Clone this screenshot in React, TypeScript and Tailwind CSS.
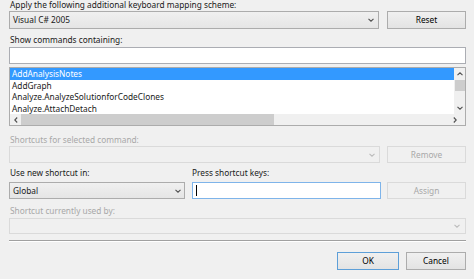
import React from "react"

// Keyboard mapping dialog, options page

const Chevron = ({ dim = false, dir = "down" }: { dim?: boolean; dir?: "down" | "up" | "left" | "right" }) => {
  const rot = { down: 0, up: 180, left: 90, right: -90 }[dir]
  return (
    <svg width="6" height="4" viewBox="0 0 6 4" style={{ transform: `rotate(${rot}deg)` }}>
      <path d="M0.5 0.8 L3 3.2 L5.5 0.8" fill="none" stroke={dim ? "#bcbcbc" : "#505050"} strokeWidth="1.1" />
    </svg>
  )
}

const Btn = ({ label, disabled = false, primary = false }: { label: string; disabled?: boolean; primary?: boolean }) => (
  <div
    className={`flex h-full items-center justify-center border ${
      disabled
        ? "border-[#dadada] bg-[#f0f0f0] text-[#a8a8a8]"
        : primary
        ? "border-[#5d9fd8] bg-gradient-to-b from-[#f0f0f0] to-[#e3e3e3] text-black"
        : "border-[#acacac] bg-gradient-to-b from-[#f0f0f0] to-[#e3e3e3] text-black"
    }`}
  >
    {label}
  </div>
)

export default function App() {
  const rows = ["AddAnalysisNotes", "AddGraph", "Analyze.AnalyzeSolutionforCodeClones", "Analyze.AttachDetach"]

  return (
    <div
      className="w-[474px] h-[279px] overflow-hidden bg-[#f0f0f0] text-[8.3px] leading-[14px] text-[#1a1a1a]"
      style={{ fontFamily: '"Noto Sans", "Open Sans", sans-serif' }}
    >
      <div className="pl-[9px] pr-[8px]">
        <div className="h-[11px] -mt-[2px] pl-[1px]">Apply the following additional keyboard mapping scheme:</div>
        <div className="mt-[2px] flex h-[18px] gap-[8px]">
          <div className="flex flex-1 items-center justify-between border border-[#acacac] bg-gradient-to-b from-[#f0f0f0] to-[#e5e5e5] pl-[3px] pr-[4px]">
            <span>Visual C# 2005</span>
            <Chevron />
          </div>
          <div className="w-[79px]">
            <Btn label="Reset" />
          </div>
        </div>

        <div className="mt-[4px] h-[14px] pl-[1px]">Show commands containing:</div>
        <div className="h-[17px] border border-[#abadb3] bg-white" />

        <div className="mt-[3px] h-[59px] border border-[#acacac] bg-white flex flex-col">
          <div className="flex flex-1">
            <div className="flex-1">
              {rows.map((r, i) => (
                <div key={r} className={`h-[11.5px] leading-[11.5px] pl-[2px] ${i === 0 ? "bg-[#3399ff] text-white" : ""}`}>
                  {r}
                </div>
              ))}
            </div>
            <div className="w-[11px] bg-[#f0f0f0] flex flex-col items-center">
              <div className="h-[12px] flex items-center"><Chevron dir="up" /></div>
              <div className="h-[11px] w-[10px] bg-[#cdcdcd]" />
              <div className="flex-1" />
              <div className="h-[12px] flex items-center"><Chevron /></div>
            </div>
          </div>
          <div className="h-[13px] bg-[#f0f0f0] flex items-center">
            <div className="w-[11px] flex justify-center"><Chevron dir="left" /></div>
            <div className="h-[11px] w-[253px] bg-[#cdcdcd]" />
            <div className="flex-1" />
            <div className="w-[20px] flex justify-center"><Chevron dir="right" /></div>
          </div>
        </div>

        <div className="mt-[7px] h-[13px] pl-[1px] text-[#a8a8a8]">Shortcuts for selected command:</div>
        <div className="flex h-[17px] gap-[7px]">
          <div className="flex flex-1 items-center justify-end border border-[#dadada] bg-[#f0f0f0] pr-[4px]">
            <Chevron dim />
          </div>
          <div className="w-[79px]">
            <Btn label="Remove" disabled />
          </div>
        </div>

        <div className="mt-[3px] flex h-[16px]">
          <div className="w-[183px] pl-[1px]">Use new shortcut in:</div>
          <div>Press shortcut keys:</div>
        </div>
        <div className="flex h-[17px]">
          <div className="flex w-[176px] items-center justify-between border border-[#acacac] bg-gradient-to-b from-[#f0f0f0] to-[#e5e5e5] pl-[3px] pr-[3px]">
            <span>Global</span>
            <Chevron />
          </div>
          <div className="ml-[7px] flex w-[189px] items-center border border-[#7eb4ea] bg-white pl-[3px]">
            <div className="h-[11px] w-[1px] bg-black" />
          </div>
          <div className="ml-[6px] flex-1">
            <Btn label="Assign" disabled />
          </div>
        </div>

        <div className="mt-[5px] h-[14px] pl-[1px] text-[#a8a8a8]">Shortcut currently used by:</div>
        <div className="flex h-[16px] items-center justify-end border border-[#dadada] bg-[#f0f0f0] pr-[5px]">
          <Chevron dim />
        </div>

        <div className="mt-[6px] h-[2px] border-t border-b border-t-[#a0a0a0] border-b-white" />

        <div className="mt-[10px] flex h-[18px] justify-end gap-[7px]">
          <div className="w-[62px]">
            <Btn label="OK" primary />
          </div>
          <div className="w-[60px]">
            <Btn label="Cancel" />
          </div>
        </div>
      </div>
    </div>
  )
}
